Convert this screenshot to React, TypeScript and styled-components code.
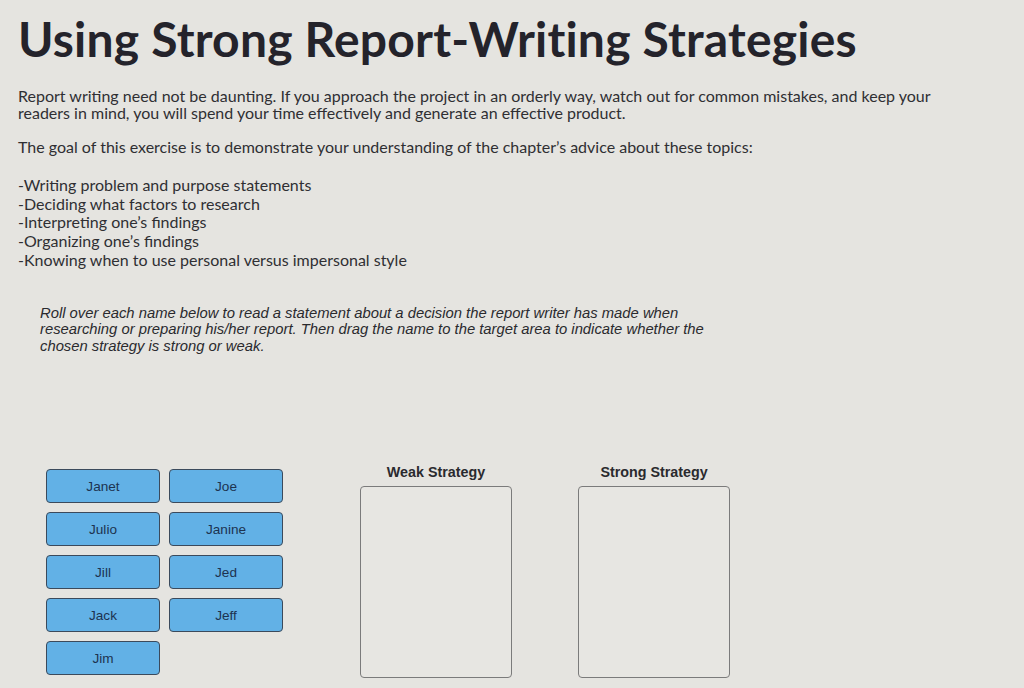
import styled, { createGlobalStyle } from "styled-components";

const GlobalStyle = createGlobalStyle`
  html, body {
    margin: 0;
    padding: 0;
    background: #e5e4e0;
  }
  * {
    box-sizing: border-box;
  }
`;

const names: string[][] = [
  ["Janet", "Joe"],
  ["Julio", "Janine"],
  ["Jill", "Jed"],
  ["Jack", "Jeff"],
  ["Jim"],
];

const zones = ["Weak Strategy", "Strong Strategy"];

const topics = [
  "-Writing problem and purpose statements",
  "-Deciding what factors to research",
  "-Interpreting one\u2019s findings",
  "-Organizing one\u2019s findings",
  "-Knowing when to use personal versus impersonal style",
];

const App = () => {
  return (
    <>
      <GlobalStyle />
      <Page>
        <Title>Using Strong Report-Writing Strategies</Title>

        <Intro>
          Report writing need not be daunting. If you approach the project in an
          orderly way, watch out for common mistakes, and keep your readers in
          mind, you will spend your time effectively and generate an effective
          product.
        </Intro>
        <Intro>
          The goal of this exercise is to demonstrate your understanding of the
          chapter’s advice about these topics:
        </Intro>

        <TopicList>
          {topics.map((topic) => (
            <li key={topic}>{topic}</li>
          ))}
        </TopicList>

        <Instructions>
          Roll over each name below to read a statement about a decision the
          report writer has made when researching or preparing his/her report.
          Then drag the name to the target area to indicate whether the chosen
          strategy is strong or weak.
        </Instructions>

        <Activity>
          <NameGrid>
            {names.flat().map((name) => (
              <NameChip key={name} type="button">
                {name}
              </NameChip>
            ))}
          </NameGrid>

          <Zones>
            {zones.map((zone) => (
              <Zone key={zone}>
                <ZoneLabel>{zone}</ZoneLabel>
                <DropBox />
              </Zone>
            ))}
          </Zones>
        </Activity>
      </Page>
    </>
  );
};

const Page = styled.div`
  width: 1024px;
  height: 688px;
  overflow: hidden;
  padding: 10px 0 0 18px;
  color: #2a2a2e;
  font-family: Lato, "Open Sans", sans-serif;
`;

const Title = styled.h1`
  margin: 0;
  font-size: 48px;
  line-height: 58px;
  font-weight: 700;
  color: #24232b;
  letter-spacing: 0.2px;
`;

const Intro = styled.p`
  margin: 19px 0 0;
  width: 930px;
  font-size: 16px;
  line-height: 17px;
  color: #2f2f33;

  & + & {
    margin-top: 17px;
  }
`;

const TopicList = styled.ul`
  list-style: none;
  margin: 21px 0 0;
  padding: 0;
  font-size: 16px;
  line-height: 18.7px;
  color: #2f2f33;
`;

const Instructions = styled.p`
  margin: 35px 0 0 22px;
  width: 680px;
  font-family: "Liberation Sans", Arial, sans-serif;
  font-style: italic;
  font-size: 14.8px;
  line-height: 16.5px;
  color: #2a2a2e;
`;

const Activity = styled.div`
  display: flex;
  align-items: flex-start;
  margin-top: 109px;
  padding-left: 28px;
`;

const NameGrid = styled.div`
  display: grid;
  grid-template-columns: repeat(2, 114px);
  grid-auto-rows: 34px;
  column-gap: 9px;
  row-gap: 9px;
  margin-top: 6px;
`;

const NameChip = styled.button`
  border: 1px solid #3b4a5c;
  border-radius: 4px;
  background: #62b1e6;
  color: #1d3350;
  font-family: "Liberation Sans", Arial, sans-serif;
  font-size: 13.6px;
  padding: 0;
  cursor: grab;
`;

const Zones = styled.div`
  display: flex;
  gap: 66px;
  margin-left: 77px;
`;

const Zone = styled.div`
  display: flex;
  flex-direction: column;
  align-items: center;
  width: 152px;
`;

const ZoneLabel = styled.div`
  font-family: "Liberation Sans", Arial, sans-serif;
  font-weight: 700;
  font-size: 14.3px;
  line-height: 18px;
  color: #2a2a2e;
`;

const DropBox = styled.div`
  margin-top: 5px;
  width: 152px;
  height: 192px;
  border: 1px solid #7b7b7b;
  border-radius: 4px;
  background: #e7e6e2;
`;

export default App;
